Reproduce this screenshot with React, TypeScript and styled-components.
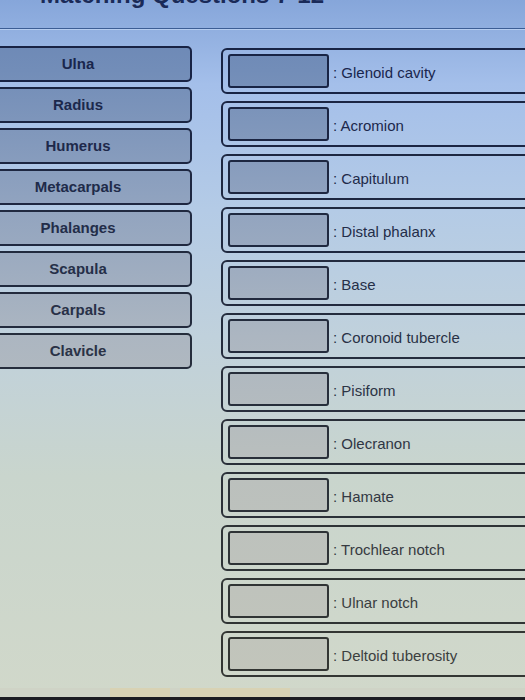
import React from "react";
import styled, { createGlobalStyle } from "styled-components";

const GlobalStyle = createGlobalStyle`
  html, body {
    margin: 0;
    padding: 0;
  }
  body {
    font-family: "Liberation Sans", Arial, sans-serif;
    background: #c9d3cf;
  }
`;

const bones = [
  "Ulna",
  "Radius",
  "Humerus",
  "Metacarpals",
  "Phalanges",
  "Scapula",
  "Carpals",
  "Clavicle"
];

const parts = [
  "Glenoid cavity",
  "Acromion",
  "Capitulum",
  "Distal phalanx",
  "Base",
  "Coronoid tubercle",
  "Pisiform",
  "Olecranon",
  "Hamate",
  "Trochlear notch",
  "Ulnar notch",
  "Deltoid tuberosity"
];

// photo fades from blue at the top to grey-green at the bottom
const mix = (a: number[], b: number[], t: number) => {
  const k = Math.max(0, Math.min(1, t));
  const c = a.map((v, i) => Math.round(v + (b[i] - v) * k));
  return `rgb(${c[0]}, ${c[1]}, ${c[2]})`;
};

const borderAt = (t: number) => mix([22, 34, 70], [52, 55, 50], t);
const inkAt = (t: number) => mix([22, 36, 78], [62, 64, 62], t);

const Page = styled.div`
  width: 525px;
  height: 700px;
  overflow: hidden;
  display: flex;
  flex-direction: column;
  background: linear-gradient(
    180deg,
    #86a6da 0%,
    #a4bfea 12%,
    #b4cbe6 30%,
    #c0d1dc 48%,
    #c9d5cd 68%,
    #d1d8ca 100%
  );
`;

const Header = styled.div`
  height: 28px;
  border-bottom: 1px solid #3c5d94;
  box-shadow: 0 1px 0 rgba(220, 235, 255, 0.5);
  overflow: hidden;
  flex-shrink: 0;
`;

// the photo only catches the bottom of the heading
const Title = styled.h1`
  margin: -19px 0 0 40px;
  font-size: 24px;
  font-weight: bold;
  color: #1a2a58;
  white-space: nowrap;
`;

const Content = styled.div`
  flex: 1;
  display: flex;
  align-items: flex-start;
  padding-top: 17px;
`;

const BoneColumn = styled.div`
  margin-left: -36px;
  width: 228px;
  display: flex;
  flex-direction: column;
  gap: 5px;
  flex-shrink: 0;
`;

const fixedFill = `
  background-image: linear-gradient(
    180deg,
    #6784b4 0%,
    #728db8 10%,
    #8fa2bf 28%,
    #acb6c1 48%,
    #bbc0bd 68%,
    #c3c6bb 100%
  );
  background-attachment: fixed;
  background-size: 525px 700px;
`;

const BoneButton = styled.div<{ $t: number }>`
  box-sizing: border-box;
  height: 36px;
  border: 2px solid ${p => borderAt(p.$t)};
  border-radius: 5px;
  ${fixedFill}
  display: flex;
  align-items: center;
  justify-content: center;
  font-size: 15px;
  font-weight: bold;
  color: ${p => inkAt(p.$t)};
  padding-bottom: 2px;
`;

const PartColumn = styled.div`
  margin-left: 29px;
  width: 340px;
  display: flex;
  flex-direction: column;
  gap: 7px;
  padding-top: 2px;
  flex-shrink: 0;
`;

const PartRow = styled.div<{ $t: number }>`
  box-sizing: border-box;
  height: 46px;
  border: 2px solid ${p => borderAt(p.$t)};
  border-radius: 6px;
  display: flex;
  align-items: center;
  padding-left: 5px;
  gap: 4px;
`;

const DropBox = styled.div<{ $t: number }>`
  box-sizing: border-box;
  width: 101px;
  height: 34px;
  border: 2px solid ${p => borderAt(p.$t)};
  border-radius: 3px;
  ${fixedFill}
`;

const PartLabel = styled.span<{ $t: number }>`
  font-size: 15px;
  color: ${p => inkAt(p.$t)};
  padding-top: 3px;
  white-space: nowrap;
`;

const Taskbar = styled.div`
  height: 12px;
  flex-shrink: 0;
  display: flex;
  align-items: flex-start;
  background: linear-gradient(180deg, #cfd3c6 0%, #cfd3c6 75%, #1c1c22 75%);
`;

const TaskItem = styled.div<{ $w: number; $ml: number }>`
  width: ${p => p.$w}px;
  height: 9px;
  margin-left: ${p => p.$ml}px;
  background: #d8d2b4;
`;

export default function App() {
  return (
    <>
      <GlobalStyle />
      <Page>
        <Header>
          <Title>Matching Questions 7-12</Title>
        </Header>
        <Content>
          <BoneColumn>
            {bones.map((b, i) => (
              <BoneButton key={b} $t={(46 + i * 41) / 660}>
                {b}
              </BoneButton>
            ))}
          </BoneColumn>
          <PartColumn>
            {parts.map((name, i) => {
              const t = (48 + i * 53) / 660;
              return (
                <PartRow key={name} $t={t}>
                  <DropBox $t={t} />
                  <PartLabel $t={t}>: {name}</PartLabel>
                </PartRow>
              );
            })}
          </PartColumn>
        </Content>
        <Taskbar>
          <TaskItem $w={60} $ml={110} />
          <TaskItem $w={110} $ml={10} />
        </Taskbar>
      </Page>
    </>
  );
}
